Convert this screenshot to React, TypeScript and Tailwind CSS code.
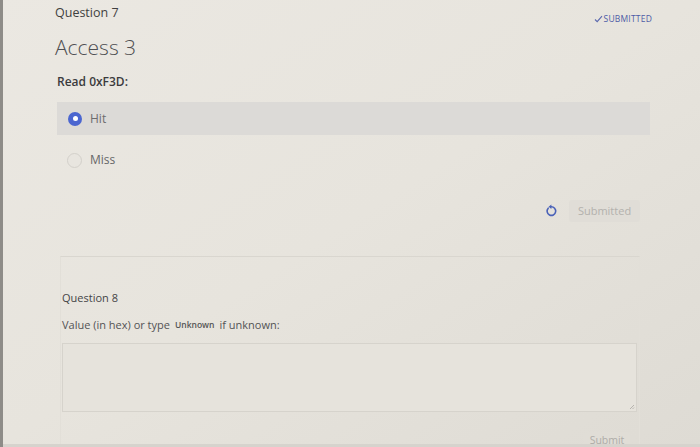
import React from "react";

export default function App() {
  return (
    <div
      className="w-[700px] h-[447px] overflow-hidden flex bg-linear-to-br from-[#ebe8e2] via-[#e7e4dd] to-[#dedbd4]"
      style={{ fontFamily: '"Open Sans", "Liberation Sans", sans-serif' }}
    >
      <div className="w-[3px] h-full bg-[#8e8c88] shrink-0" />
      <div className="flex-1 flex flex-col relative">
        <div className="shrink-0 flex justify-between items-start pl-[52px] pr-[48px] pt-[4px]">
          <div className="text-[12.5px] text-[#3f3f40] leading-[18px]">Question 7</div>
          <div className="flex items-center gap-[1px] text-[8.5px] text-[#4d5ba6] tracking-[0.2px] mt-[9px] leading-[12px]">
            <svg width="9" height="8" viewBox="0 0 9 8" fill="none">
              <path d="M1 4.5 L3.2 6.6 L8 1.2" stroke="#5a68ae" strokeWidth="1.1" />
            </svg>
            SUBMITTED
          </div>
        </div>
        <div className="shrink-0 pl-[52px] mt-[8px] text-[21px] font-light text-[#4f4f52] leading-[28px]">Access 3</div>
        <div className="shrink-0 pl-[54px] mt-[13px] text-[12px] font-semibold text-[#3b3b3d] leading-[16px]">Read 0xF3D:</div>
        <div className="shrink-0 ml-[54px] mr-[50px] mt-[12px] h-[33px] bg-[#dcdad7] flex items-center pl-[11px]">
          <div className="w-[14px] h-[14px] rounded-full bg-[#4b66d0] flex items-center justify-center">
            <div className="w-[5px] h-[5px] rounded-full bg-white" />
          </div>
          <span className="ml-[8px] text-[12px] text-[#6c6c6e]">Hit</span>
        </div>
        <div className="shrink-0 ml-[54px] mt-[17px] h-[16px] flex items-center pl-[10px]">
          <div className="w-[15px] h-[15px] rounded-full border border-[#d3d0ca] bg-[#e8e5df]" />
          <span className="ml-[8px] text-[12px] text-[#666668]">Miss</span>
        </div>
        <div className="shrink-0 flex justify-end items-center gap-[11px] pr-[60px] mt-[32px]">
          <svg width="14" height="14" viewBox="0 0 14 14" fill="none">
            <path d="M4.2 4.2 A4.3 4.3 0 1 0 7 2.8" stroke="#4a62b8" strokeWidth="1.6" strokeLinecap="round" />
            <path d="M7.4 0.6 L7.4 5 L4.6 2.8 Z" fill="#4a62b8" />
          </svg>
          <div className="w-[71px] h-[22px] bg-[#e0ddd7] rounded-[3px] flex items-center justify-center text-[11px] text-[#b3b1ad]">
            Submitted
          </div>
        </div>
        <div className="shrink-0 ml-[57px] mr-[60px] mt-[34px] border-t border-l border-r border-t-[#d9d6cf] border-l-[#e2dfd8] border-r-[#e2dfd8] flex flex-col pl-[1px] pr-[2px]">
          <div className="mt-[33px] text-[11px] text-[#444446] leading-[16px]">Question 8</div>
          <div className="mt-[11px] text-[11px] text-[#535355] leading-[16px] flex items-center">
            Value (in hex) or type
            <span className="mx-[5px] text-[8.5px] text-[#555] font-semibold">Unknown</span>
            if unknown:
          </div>
          <div className="mt-[10px] h-[69px] border border-[#d6d3cc] bg-[#e6e3dc] relative">
            <svg className="absolute right-[1px] bottom-[1px]" width="6" height="6" viewBox="0 0 6 6">
              <path d="M5 1 L1 5 M5 3.5 L3.5 5" stroke="#a9a7a2" strokeWidth="0.8" />
            </svg>
          </div>
          <div className="flex justify-end mt-[20px] pr-[7px]">
            <div className="w-[46px] h-[16px] bg-[#e0ddd6] rounded-t-[3px] text-[10.5px] text-[#aeaca8] flex justify-center pt-[1px]">
              Submit
            </div>
          </div>
        </div>
        <div className="absolute left-0 right-0 bottom-0 h-[3px] bg-[#d6d3cd]" />
      </div>
    </div>
  );
}
